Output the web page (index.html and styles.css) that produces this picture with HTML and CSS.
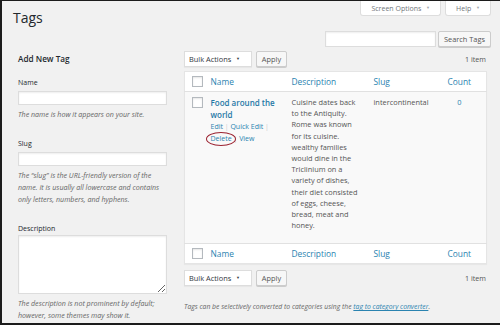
FILE: index.html
```html
<!DOCTYPE html>
<html lang="en">
<head>
  <meta charset="UTF-8">
  <meta name="viewport" content="width=device-width, initial-scale=1.0">
  <title>Tags</title>
  <link rel="stylesheet" href="styles.css">
</head>
<body>
  <header class="header">
    <h1>Tags</h1>
    <div class="header-tools">
      <div class="screen-meta">
        <button class="meta-tab">Screen Options <span class="arrow">▼</span></button>
        <button class="meta-tab">Help <span class="arrow">▼</span></button>
      </div>
      <div class="search-box">
        <input type="search" class="search-input">
        <button class="btn">Search Tags</button>
      </div>
    </div>
  </header>

  <main class="columns">
    <section class="col-left">
      <h2>Add New Tag</h2>
      <div class="form-field">
        <label>Name</label>
        <input type="text" class="field-input">
        <p class="help">The name is how it appears on your site.</p>
      </div>
      <div class="form-field">
        <label>Slug</label>
        <input type="text" class="field-input">
        <p class="help">The “slug” is the URL-friendly version of the name. It is usually all lowercase and contains only letters, numbers, and hyphens.</p>
      </div>
      <div class="form-field">
        <label>Description</label>
        <textarea class="field-textarea"></textarea>
        <p class="help">The description is not prominent by default; however, some themes may show it.</p>
      </div>
    </section>

    <section class="col-right">
      <div class="tablenav">
        <div class="select">Bulk Actions <span class="caret">▼</span></div>
        <button class="btn">Apply</button>
        <span class="count-label">1 item</span>
      </div>

      <table class="tags-table">
        <colgroup>
          <col class="c-cb">
          <col class="c-name">
          <col class="c-desc">
          <col class="c-slug">
          <col class="c-count">
        </colgroup>
        <thead>
          <tr>
            <th class="cb"><input type="checkbox"></th>
            <th><a href="#">Name</a></th>
            <th><a href="#">Description</a></th>
            <th><a href="#">Slug</a></th>
            <th class="num"><a href="#">Count</a></th>
          </tr>
        </thead>
        <tbody>
          <tr>
            <td class="cb"><input type="checkbox"></td>
            <td>
              <a href="#" class="row-title">Food around the world</a>
              <div class="row-actions">
                <a href="#">Edit</a><span class="sep"> | </span><a href="#">Quick Edit</a><span class="sep"> | </span>
                <a href="#" class="delete">Delete</a><span class="sep"> | </span><a href="#">View</a>
              </div>
            </td>
            <td class="desc">Cuisine dates back to the Antiquity. Rome was known for its cuisine. wealthy families would dine in the Triclinium on a variety of dishes, their diet consisted of eggs, cheese, bread, meat and honey.</td>
            <td>intercontinental</td>
            <td class="num"><a href="#">0</a></td>
          </tr>
        </tbody>
        <tfoot>
          <tr>
            <th class="cb"><input type="checkbox"></th>
            <th><a href="#">Name</a></th>
            <th><a href="#">Description</a></th>
            <th><a href="#">Slug</a></th>
            <th class="num"><a href="#">Count</a></th>
          </tr>
        </tfoot>
      </table>

      <div class="tablenav bottom">
        <div class="select">Bulk Actions <span class="caret">▼</span></div>
        <button class="btn">Apply</button>
        <span class="count-label">1 item</span>
      </div>

      <p class="note">Tags can be selectively converted to categories using the <a href="#">tag to category converter</a>.</p>
    </section>
  </main>
</body>
</html>
```

FILE: styles.css
```css
* {
  box-sizing: border-box;
}

body {
  margin: 0;
  height: 325px;
  overflow: hidden;
  font-family: 'Open Sans', 'Noto Sans', sans-serif;
  background-color: #f1f1f1;
  color: #444;
  border-left: 2px solid #1c1c1c;
  border-top: 1px solid #1c1c1c;
  border-bottom: 2px solid #1c1c1c;
}

a {
  color: #2a83b0;
  text-decoration: none;
}

button {
  font-family: inherit;
}

.header {
  display: flex;
  justify-content: space-between;
  align-items: flex-start;
  padding: 0 9px 0 11px;
}

.header h1 {
  margin: 8px 0 0;
  font-size: 14px;
  line-height: 18px;
  font-weight: 400;
  color: #23282d;
}

.header-tools {
  display: flex;
  flex-direction: column;
  align-items: flex-end;
  gap: 15px;
}

.screen-meta {
  display: flex;
  gap: 4px;
}

.meta-tab {
  height: 15px;
  padding: 0 10px;
  font-size: 7px;
  color: #72777c;
  background: #fff;
  border: 1px solid #ddd;
  border-top: none;
  border-radius: 0 0 3px 3px;
}

.meta-tab .arrow,
.select .caret {
  font-size: 4px;
  vertical-align: 2px;
  margin-left: 3px;
}

.meta-tab .arrow {
  color: #a0a5aa;
}

.search-box {
  display: flex;
  gap: 2px;
}

.search-input {
  width: 111px;
  height: 16px;
  border: 1px solid #ddd;
  background: #fff;
  box-shadow: inset 0 1px 2px rgba(0, 0, 0, 0.07);
}

.btn {
  height: 16px;
  padding: 0 5px;
  font-size: 7.4px;
  color: #555;
  background: #f7f7f7;
  border: 1px solid #ccc;
  border-radius: 2px;
  box-shadow: 0 1px 0 #ccc;
}

.columns {
  display: flex;
  gap: 17px;
  margin-top: 4px;
  padding-left: 16px;
}

/* left column: add new tag form */
.col-left {
  width: 149px;
}

.col-left h2 {
  margin: 2px 0 13px;
  font-size: 8.2px;
  line-height: 12px;
  font-weight: 600;
  color: #23282d;
}

.form-field {
  margin-bottom: 19px;
}

.form-field label {
  display: block;
  font-size: 7px;
  line-height: 10px;
  color: #23282d;
  margin-bottom: 3px;
}

.field-input {
  display: block;
  width: 149px;
  height: 14px;
  border: 1px solid #ddd;
  background: #fff;
  box-shadow: inset 0 1px 2px rgba(0, 0, 0, 0.07);
}

.field-textarea {
  display: block;
  width: 149px;
  height: 59px;
  margin-top: -2px;
  border: 1px solid #ddd;
  background: #fff;
  box-shadow: inset 0 1px 2px rgba(0, 0, 0, 0.07);
}

.help {
  margin: 3px 0 0;
  font-size: 7.1px;
  line-height: 12px;
  font-style: italic;
  color: #666;
}

/* right column: tag list */
.col-right {
  width: 302px;
}

.tablenav {
  display: flex;
  align-items: center;
  gap: 4px;
  height: 16px;
}

.tablenav .btn {
  width: 31px;
  padding: 0;
}

.tablenav.bottom {
  margin-top: 6px;
}

.select {
  width: 68px;
  height: 16px;
  padding-left: 4px;
  font-size: 7.4px;
  line-height: 14px;
  color: #32373c;
  background: #fff;
  border: 1px solid #ddd;
  box-shadow: 0 1px 1px rgba(0, 0, 0, 0.04);
}

.count-label {
  margin-left: auto;
  font-size: 7.2px;
  color: #555;
}

.tags-table {
  width: 302px;
  margin-top: 4px;
  table-layout: fixed;
  border-collapse: collapse;
  background: #fff;
  border: 1px solid #e5e5e5;
  box-shadow: 0 1px 1px rgba(0, 0, 0, 0.04);
}

.c-cb { width: 22px; }
.c-name { width: 81px; }
.c-desc { width: 82px; }
.c-slug { width: 63px; }
.c-count { width: 54px; }

.tags-table th {
  height: 20px;
  padding: 0 4px;
  font-size: 8.4px;
  font-weight: 400;
  text-align: left;
}

.tags-table thead th {
  border-bottom: 1px solid #e1e1e1;
}

.tags-table tfoot th {
  border-top: 1px solid #e1e1e1;
}

.tags-table tbody tr {
  background: #f9f9f9;
}

.tags-table td {
  padding: 5px 4px 12px;
  vertical-align: top;
  font-size: 7.4px;
  line-height: 11.2px;
  color: #555;
}

.tags-table td.desc {
  padding-right: 8px;
}

.tags-table .cb {
  padding: 0 0 0 7px;
}

.tags-table td.cb {
  padding-top: 5px;
}

.tags-table .num {
  text-align: center;
}

input[type="checkbox"] {
  appearance: none;
  display: block;
  width: 11px;
  height: 11px;
  margin: 0;
  background: #fff;
  border: 1px solid #b4b9be;
  box-shadow: inset 0 1px 2px rgba(0, 0, 0, 0.1);
}

.row-title {
  display: block;
  font-size: 8px;
  line-height: 11.5px;
  font-weight: 600;
  color: #1f78a6;
}

.row-actions {
  margin-top: 1px;
  font-size: 7px;
  line-height: 11.5px;
}

.row-actions .sep {
  color: #ccc;
}

.delete {
  position: relative;
}

/* red marker drawn over the Delete link */
.delete::after {
  content: '';
  position: absolute;
  left: -5px;
  top: -2px;
  width: 28px;
  height: 12px;
  border: 1.5px solid #9b2230;
  border-radius: 50%;
}

.note {
  margin: 16px 0 0;
  font-size: 6.8px;
  font-style: italic;
  color: #666;
}

.note a {
  text-decoration: underline;
}
```
